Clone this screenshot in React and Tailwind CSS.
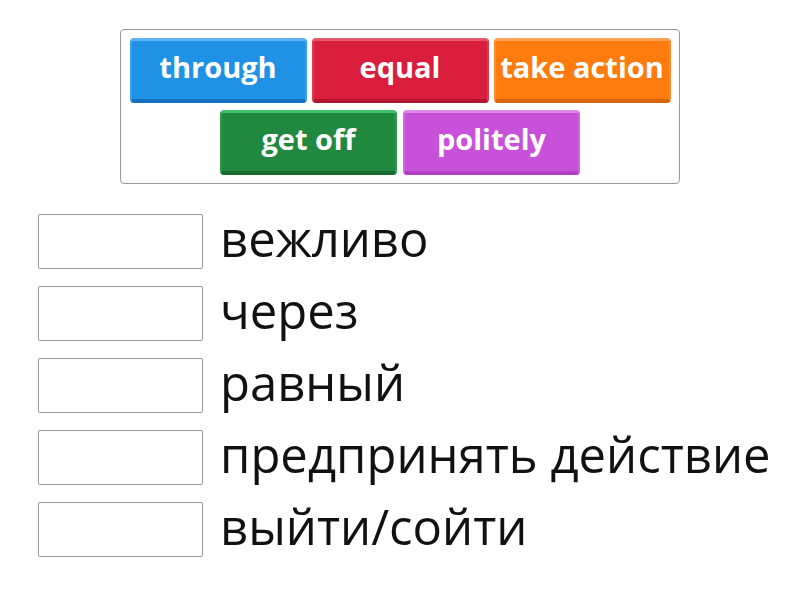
import React from "react";

const tiles1 = [
  { t: "through", c: "bg-[#1f92e6] border-t-[#5fb3f0] border-x-[#3aa0ea] border-b-[#1570bd]" },
  { t: "equal", c: "bg-[#d81e3b] border-t-[#e4566a] border-x-[#de3a52] border-b-[#b0152e]" },
  { t: "take action", c: "bg-[#ff7b0e] border-t-[#ffa057] border-x-[#ff8d30] border-b-[#d8650a]" },
];
const tiles2 = [
  { t: "get off", c: "bg-[#21883f] border-t-[#3fc266] border-x-[#2a9d4b] border-b-[#176a2f]" },
  { t: "politely", c: "bg-[#c851d9] border-t-[#dc8ae6] border-x-[#d16ade] border-b-[#b33ec6]" },
];

function Tile({ t, c }) {
  return (
    <div
      className={`w-[177px] h-[65px] rounded-[4px] border-t-[3px] border-x-[2px] border-b-[4px] flex items-center justify-center text-white font-bold text-[29px] leading-none ${c}`}
      style={{ fontFamily: "'Open Sans', sans-serif" }}
    >
      <span className="-mt-[7px] whitespace-nowrap">{t}</span>
    </div>
  );
}

const rows = ["вежливо", "через", "равный", "предпринять действие", "выйти/сойти"];

export default function App() {
  return (
    <div className="w-[800px] h-[600px] bg-white flex flex-col items-center pt-[29px]" style={{ fontFamily: "'Open Sans', sans-serif" }}>
      <div className="w-[560px] h-[155px] border border-[#999] rounded-[4px] flex flex-col items-center pt-[8px] gap-[7px]">
        <div className="flex gap-[5px]">
          {tiles1.map((x) => (
            <Tile key={x.t} {...x} />
          ))}
        </div>
        <div className="flex gap-[6px]">
          {tiles2.map((x) => (
            <Tile key={x.t} {...x} />
          ))}
        </div>
      </div>
      <div className="self-start ml-[38px] mt-[30px] flex flex-col gap-[17px]">
        {rows.map((r) => (
          <div key={r} className="flex items-center h-[55px]">
            <div className="w-[165px] h-[55px] border border-[#999] rounded-[2px] bg-white shrink-0" />
            <span className="ml-[17px] text-[49px] text-[#111] leading-none whitespace-nowrap -mt-[6px]">{r}</span>
          </div>
        ))}
      </div>
    </div>
  );
}
